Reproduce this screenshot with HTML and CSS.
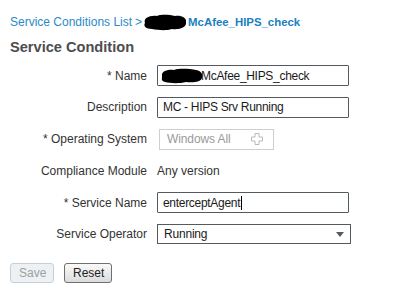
FILE: index.html
```html
<!DOCTYPE html>
<html>
<head>
<meta charset="utf-8">
<link rel="stylesheet" href="styles.css">
</head>
<body>
<div class="page">
  <div class="crumb">
    <span class="crumb-link">Service Conditions List</span>
    <span class="crumb-sep">&gt;</span>
    <span class="crumb-cur"><svg class="blob blob-crumb" width="46" height="17" viewBox="0 0 46 17"><path d="M3 9 C1 4 8 1 15 2 C20 0 28 1 33 2 C39 1 45 4 44 8 C45 13 38 16 30 15 C24 17 16 16 10 15 C4 15 1 12 3 9 Z" fill="#000"/></svg>McAfee_HIPS_check</span>
  </div>
  <h1 class="title">Service Condition</h1>
  <div class="form">
    <label class="lbl">* Name</label>
    <div class="field"><div class="input"><svg class="blob blob-name" width="43" height="16" viewBox="0 0 43 16"><path d="M2 8 C1 3 8 1 14 2 C20 0 30 1 36 2 C42 3 43 7 42 10 C41 14 33 15 26 14 C18 16 10 15 5 14 C1 13 2 11 2 8 Z" fill="#000"/></svg>McAfee_HIPS_check</div></div>

    <label class="lbl">Description</label>
    <div class="field"><div class="input">MC - HIPS Srv Running</div></div>

    <label class="lbl">* Operating System</label>
    <div class="field"><div class="os">Windows All<svg class="plus" width="14" height="14" viewBox="0 0 14 14"><path d="M5 1.5 H9 V5 H12.5 V9 H9 V12.5 H5 V9 H1.5 V5 H5 Z" fill="#fff" stroke="#b9b9b9" stroke-width="1"/></svg></div></div>

    <label class="lbl">Compliance Module</label>
    <div class="field"><span class="static">Any version</span></div>

    <label class="lbl">* Service Name</label>
    <div class="field"><div class="input">enterceptAgent<span class="caret"></span></div></div>

    <label class="lbl">Service Operator</label>
    <div class="field"><div class="select">Running<span class="arrow"></span></div></div>
  </div>
  <div class="buttons">
    <button class="btn btn-disabled">Save</button>
    <button class="btn btn-reset">Reset</button>
  </div>
</div>
</body>
</html>
```
FILE: styles.css
```css
html, body {
  margin: 0;
  padding: 0;
  background: #fff;
}
.page {
  padding: 14px 0 0 10px;
  font-family: "Liberation Sans", Arial, sans-serif;
  font-size: 12px;
  color: #333;
}
.crumb {
  display: flex;
  align-items: center;
  height: 16px;
  line-height: 16px;
  font-size: 12px;
  color: #2a8ac8;
}
.crumb-sep {
  margin-left: 3px;
}
.crumb-cur {
  display: flex;
  align-items: center;
  font-weight: bold;
  font-size: 11.4px;
  color: #1a7fc0;
  margin-left: 0;
}
.blob {
  display: block;
  flex: none;
}
.title {
  margin: 8px 0 0 0;
  font-size: 14.6px;
  line-height: 18px;
  font-weight: bold;
  color: #4d4d4d;
}
.form {
  margin-top: 9px;
  display: grid;
  grid-template-columns: 137px 194px;
  grid-auto-rows: 21px;
  column-gap: 10px;
  row-gap: 10.8px;
}
.lbl {
  display: flex;
  align-items: center;
  justify-content: flex-end;
  color: #333;
  white-space: nowrap;
}
.field {
  display: flex;
  align-items: center;
}
.input {
  box-sizing: border-box;
  width: 192px;
  height: 21px;
  border: 1px solid #545b60;
  border-radius: 1px;
  display: flex;
  align-items: center;
  padding-left: 5px;
  color: #1a1a1a;
  font-size: 12px;
  letter-spacing: -0.3px;
}
.blob-name {
  margin-left: -3px;
  margin-right: -2px;
}
.caret {
  display: inline-block;
  width: 1px;
  height: 14px;
  background: #000;
  margin-left: 1px;
}
.os {
  box-sizing: border-box;
  width: 115px;
  height: 21px;
  margin-left: 2px;
  border: 1px solid #cfcfcf;
  display: flex;
  align-items: center;
  padding-left: 7px;
  color: #9a9a9a;
  font-size: 12px;
  letter-spacing: -0.1px;
}
.plus {
  margin-left: 19px;
}
.static {
  color: #333;
  font-size: 12px;
}
.select {
  box-sizing: border-box;
  width: 194px;
  height: 20px;
  border: 1px solid #545b60;
  display: flex;
  align-items: center;
  padding-left: 6px;
  color: #1a1a1a;
  font-size: 12px;
  letter-spacing: -0.2px;
  position: relative;
}
.arrow {
  position: absolute;
  right: 6px;
  top: 7px;
  width: 0;
  height: 0;
  border-left: 4px solid transparent;
  border-right: 4px solid transparent;
  border-top: 5px solid #5a5a5a;
}
.buttons {
  display: flex;
  gap: 10px;
  margin-top: 18px;
}
.btn {
  box-sizing: border-box;
  height: 20px;
  padding: 0 8px;
  font-family: "Liberation Sans", Arial, sans-serif;
  font-size: 12px;
  border-radius: 3px;
}
.btn-disabled {
  width: 44px;
  background: #eef1f3;
  border: 1px solid #c9d0d5;
  color: #9aa0a4;
}
.btn-reset {
  width: 48px;
  background: linear-gradient(#fafafa, #dcdcdc);
  border: 1px solid #6f6f6f;
  color: #222;
}
```
